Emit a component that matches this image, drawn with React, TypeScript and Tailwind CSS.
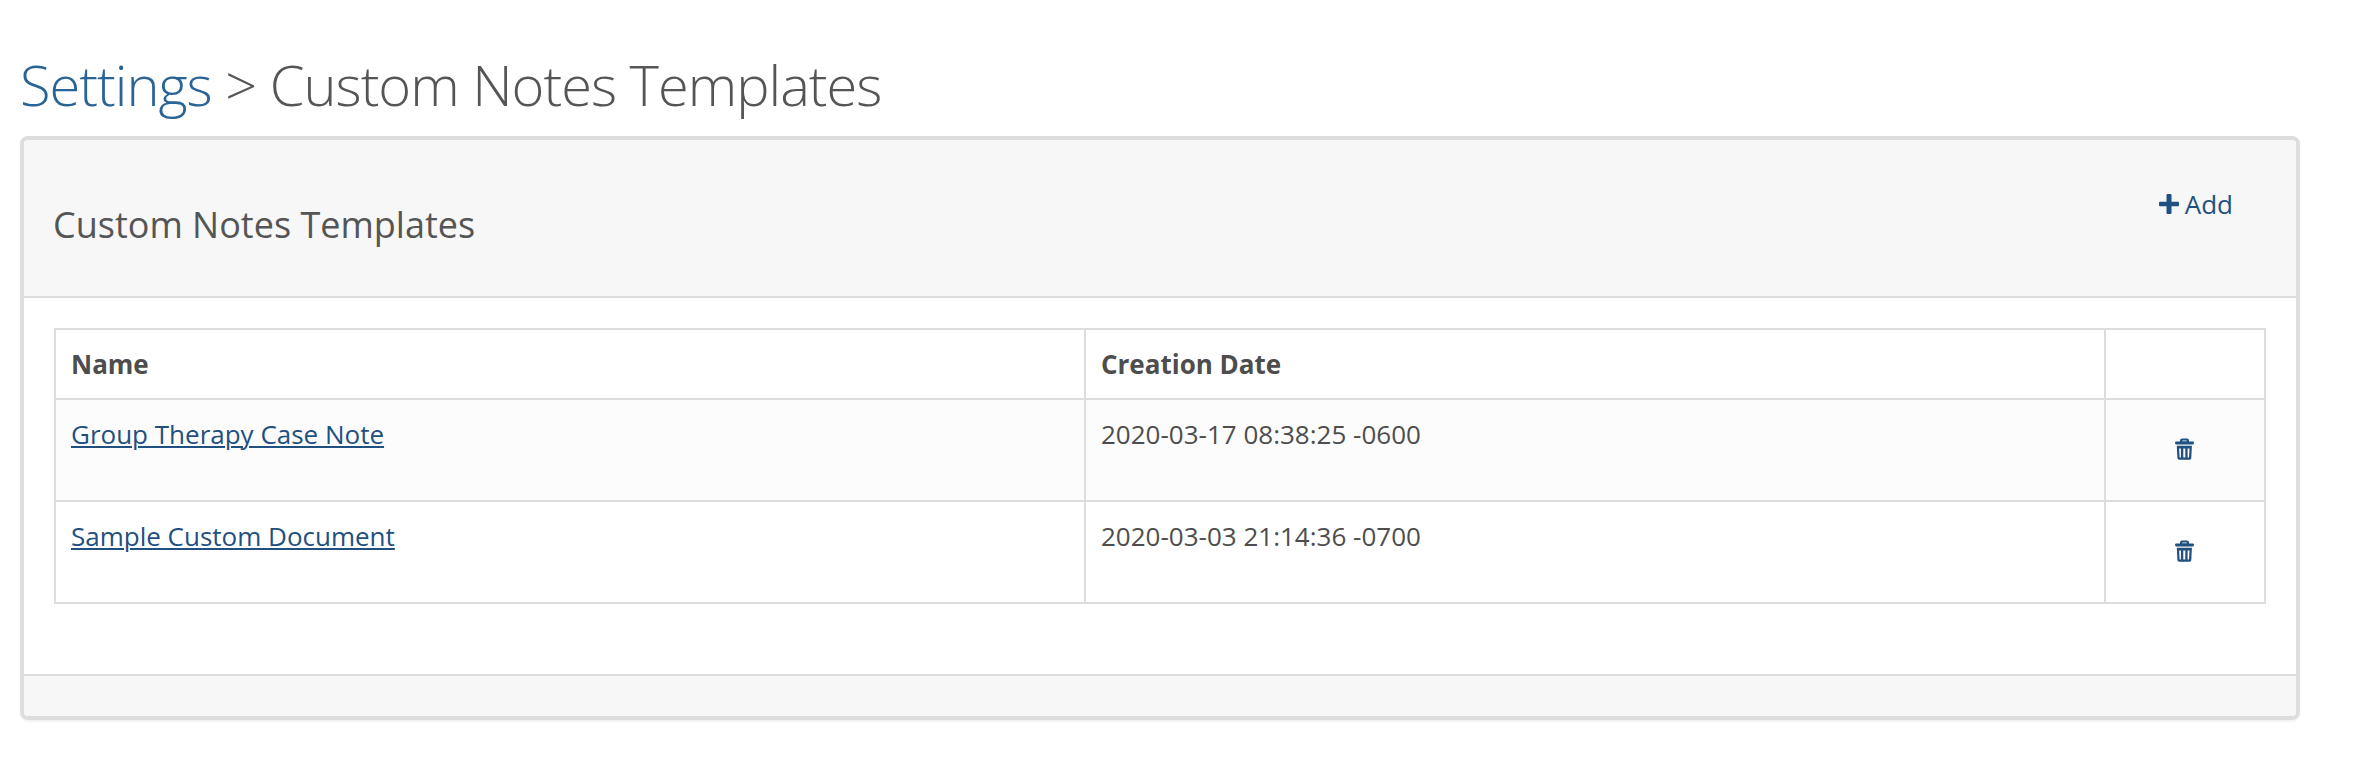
import { clsx } from 'clsx'

interface NoteTemplate {
  id: number
  name: string
  createdAt: string
}

const templates: NoteTemplate[] = [
  { id: 1, name: 'Group Therapy Case Note', createdAt: '2020-03-17 08:38:25 -0600' },
  { id: 2, name: 'Sample Custom Document', createdAt: '2020-03-03 21:14:36 -0700' },
]

const PlusIcon = () => (
  <svg viewBox="0 0 20 20" className="h-5 w-5 shrink-0" fill="currentColor" aria-hidden>
    <rect x="7.5" y="0" width="5" height="20" rx="1" />
    <rect x="0" y="7.7" width="20" height="4.6" rx="1" />
  </svg>
)

const TrashIcon = () => (
  <svg viewBox="0 0 19 22" className="h-[22px] w-[19px]" fill="currentColor" aria-hidden>
    <path
      fillRule="evenodd"
      d="M5 3.6V2.5Q5 .6 7 .6h5q2 0 2 1.900v1.100h3.800Q19 3.600 19 4.800q0 1.700-1.200 1.700H1.200Q0 6.500 0 4.800 0 3.600 1.200 3.600ZM7.200 3.300h4.600V2.600H7.200Z"
    />
    <path
      fillRule="evenodd"
      d="M1.800 7.700h15.100l-.6 12.300q-.1 1.800-1.800 1.800H4.200q-1.700 0-1.800-1.800ZM4.100 10.600l.5 9h1.300v-9Zm4.200 0v9h2v-9Zm4.300 0v9h1.400l.5-9Z"
    />
  </svg>
)

const cell = 'border-2 border-[#ddd] px-[15px] text-left align-top'

export default function App() {
  return (
    <main className="min-h-[768px] bg-white pt-[54px] pr-14 pl-5 font-['Open_Sans',sans-serif] text-[26px] leading-9 text-[#4d4d4d]">
      <h1 className="text-[56px] leading-[60px] font-light tracking-[-1px] text-[#555]">
        <a href="#settings" className="text-[#2a6496]">
          Settings
        </a>
        {' > Custom Notes Templates'}
      </h1>

      <section className="mt-[22px] flex h-[584px] flex-col overflow-hidden rounded-lg border-4 border-[#ddd] shadow-[0_2px_2px_rgba(0,0,0,0.05)]">
        <header className="flex h-[158px] items-start justify-between border-b-2 border-[#ddd] bg-[#f7f7f7] pr-[63px] pl-[29px]">
          <h2 className="pt-[65px] text-[36px] leading-10 text-[#555]">Custom Notes Templates</h2>
          <a href="#add" className="mt-[46px] flex items-center gap-[6px] text-[#1f5080]">
            <PlusIcon />
            Add
          </a>
        </header>

        <div className="flex-1 bg-white px-[30px] pt-[30px]">
          <table className="w-full table-fixed border-collapse">
            <colgroup>
              <col className="w-[1030px]" />
              <col className="w-[1020px]" />
              <col className="w-[160px]" />
            </colgroup>
            <thead>
              <tr className="h-[70px]">
                <th className={clsx(cell, 'pt-4 font-bold')}>Name</th>
                <th className={clsx(cell, 'pt-4 font-bold')}>Creation Date</th>
                <th className={cell} />
              </tr>
            </thead>
            <tbody>
              {templates.map((template) => (
                <tr key={template.id} className="h-[102px] odd:bg-[#fcfcfc]">
                  <td className={clsx(cell, 'pt-4')}>
                    <a
                      href={`#template-${template.id}`}
                      className="text-[#1f5080] underline decoration-2 underline-offset-[2px]"
                    >
                      {template.name}
                    </a>
                  </td>
                  <td className={clsx(cell, 'pt-4')}>{template.createdAt}</td>
                  <td className={clsx(cell, 'pt-[38px] text-[#1f5080]')}>
                    <a
                      href={`#delete-${template.id}`}
                      aria-label={`Delete ${template.name}`}
                      className="flex justify-center pr-px"
                    >
                      <TrashIcon />
                    </a>
                  </td>
                </tr>
              ))}
            </tbody>
          </table>
        </div>

        <footer className="h-[42px] border-t-2 border-[#ddd] bg-[#f7f7f7]" />
      </section>
    </main>
  )
}
